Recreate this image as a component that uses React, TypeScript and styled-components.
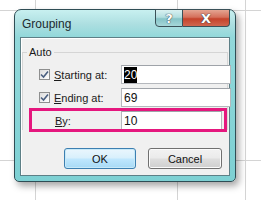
import React from 'react'
import styled, { createGlobalStyle } from 'styled-components'

const GlobalStyle = createGlobalStyle`
  html, body {
    margin: 0;
    padding: 0;
    background: #ffffff;
  }
  body {
    font-family: "Liberation Sans", Arial, sans-serif;
  }
`

const Sheet = styled.div`
  width: 261px;
  height: 200px;
  box-sizing: border-box;
  padding: 9px 0 0 14px;
  overflow: hidden;
  background-color: #ffffff;
  background-image:
    linear-gradient(to bottom, transparent 10px, #d4d4d4 10px, #d4d4d4 11px, transparent 11px),
    linear-gradient(to bottom, transparent 160px, #d4d4d4 160px, #d4d4d4 161px, transparent 161px),
    linear-gradient(to right, transparent 35px, #d4d4d4 35px, #d4d4d4 36px, transparent 36px),
    linear-gradient(to right, transparent 177px, #d4d4d4 177px, #d4d4d4 178px, transparent 178px),
    linear-gradient(to right, transparent 245px, #d4d4d4 245px, #d4d4d4 246px, transparent 246px);
`

const Dialog = styled.div`
  width: 222px;
  height: 173px;
  box-sizing: border-box;
  display: flex;
  flex-direction: column;
  border: 1px solid #2f4d55;
  border-radius: 7px 7px 5px 5px;
  background: linear-gradient(to bottom, #c8f0f0 0px, #addfe1 14px, #92d8da 27px, #7dd0d3 100%);
  box-shadow: 3px 4px 7px rgba(0, 0, 0, 0.35);
  padding: 0 5px 5px 5px;
`

const TitleBar = styled.div`
  height: 27px;
  display: flex;
  align-items: flex-start;
  justify-content: space-between;
`

const Title = styled.span`
  font-size: 12px;
  color: #1b2a30;
  padding: 7px 0 0 2px;
`

const TitleButtons = styled.div`
  display: flex;
  margin-top: -1px;
`

const TitleButton = styled.div<{ $close?: boolean }>`
  height: 18px;
  width: ${p => (p.$close ? '47px' : '28px')};
  box-sizing: border-box;
  display: flex;
  align-items: center;
  justify-content: center;
  border: 1px solid #3a5158;
  border-left-width: ${p => (p.$close ? '0' : '1px')};
  border-radius: ${p => (p.$close ? '0 0 4px 0' : '0 0 0 4px')};
  background: ${p =>
    p.$close
      ? 'linear-gradient(to bottom, #e4a592 0%, #d5705b 45%, #c5432b 55%, #d0674f 100%)'
      : 'linear-gradient(to bottom, #d9f1f1 0%, #b3dfe0 45%, #86c4c7 55%, #a6d7d9 100%)'};
  color: #ffffff;
  font-weight: bold;
  font-size: 13px;
  font-family: "DejaVu Sans", sans-serif;
  text-shadow: 0 0 1px #2a3a40, 0 0 1px #2a3a40;
`

const Client = styled.div`
  flex: 1;
  display: flex;
  flex-direction: column;
  border: 1px solid #5d7f86;
  background: #f0f0f0;
  box-shadow: inset 1px 1px 0 #ffffff;
`

const GroupBox = styled.div`
  position: relative;
  margin: 14px 1px 0 1px;
  border: 1px solid #d5d5d5;
  border-bottom: none;
  padding: 12px 0 0 16px;
  display: flex;
  flex-direction: column;
  gap: 4px;
`

const GroupLabel = styled.span`
  position: absolute;
  top: -7px;
  left: 4px;
  padding: 0 2px;
  background: #f0f0f0;
  font-size: 11px;
  color: #1a1a1a;
  line-height: 13px;
`

const Row = styled.div`
  position: relative;
  display: grid;
  grid-template-columns: 82px auto;
  align-items: center;
  height: 19px;
  margin-right: -2px;
`

const LabelCell = styled.div`
  display: flex;
  align-items: center;
`

const CheckBox = styled.span`
  width: 11px;
  height: 11px;
  box-sizing: border-box;
  border: 1px solid #8e8f8f;
  background: linear-gradient(135deg, #dcdcdc, #ffffff);
  display: flex;
  align-items: center;
  justify-content: center;
  margin-right: 4px;
`

const Label = styled.span<{ $indent?: boolean }>`
  font-size: 11px;
  color: #1a1a1a;
  padding-left: ${p => (p.$indent ? '16px' : '0')};
  u {
    text-decoration: underline;
  }
`

const Field = styled.div<{ $w?: number }>`
  width: ${p => p.$w ?? 110}px;
  height: 19px;
  box-sizing: border-box;
  border: 1px solid #b5b8bd;
  border-top-color: #9fa3a9;
  background: #ffffff;
  font-size: 12px;
  color: #111;
  display: flex;
  align-items: center;
  padding-left: 2px;
`

const Selected = styled.span`
  background: #000000;
  color: #ffffff;
  padding: 1px 0;
`

const Highlight = styled.span`
  position: absolute;
  left: -10px;
  right: 2px;
  top: -3px;
  bottom: -2px;
  border: 3px solid #e5177e;
  pointer-events: none;
`

const ButtonRow = styled.div`
  display: flex;
  gap: 12px;
  margin: 18px 0 0 43px;
`

const Button = styled.div<{ $default?: boolean }>`
  width: ${p => (p.$default ? '72px' : '74px')};
  height: 21px;
  box-sizing: border-box;
  border: 1px solid ${p => (p.$default ? '#3c7fb1' : '#707070')};
  border-radius: 3px;
  background: ${p =>
    p.$default
      ? 'linear-gradient(to bottom, #eaf6fd 0%, #d9f0fc 45%, #bee6fd 55%, #a7d9f5 100%)'
      : 'linear-gradient(to bottom, #f2f2f2 0%, #ebebeb 45%, #dddddd 55%, #cfcfcf 100%)'};
  box-shadow: inset 0 0 0 1px ${p => (p.$default ? '#c8e9f8' : '#fbfbfb')};
  display: flex;
  align-items: center;
  justify-content: center;
  font-size: 11px;
  color: #111;
`

const Check = () => (
  <svg width="9" height="9" viewBox="0 0 9 9">
    <path d="M1 4.5 L3.5 7 L8 1.5" fill="none" stroke="#4a5f80" strokeWidth="1.6" />
  </svg>
)

export default function App() {
  return (
    <Sheet>
      <GlobalStyle />
      <Dialog>
        <TitleBar>
          <Title>Grouping</Title>
          <TitleButtons>
            <TitleButton>?</TitleButton>
            <TitleButton $close>X</TitleButton>
          </TitleButtons>
        </TitleBar>
        <Client>
          <GroupBox>
            <GroupLabel>Auto</GroupLabel>
            <Row>
              <LabelCell>
                <CheckBox><Check /></CheckBox>
                <Label><u>S</u>tarting at:</Label>
              </LabelCell>
              <Field><Selected>20</Selected></Field>
            </Row>
            <Row>
              <LabelCell>
                <CheckBox><Check /></CheckBox>
                <Label><u>E</u>nding at:</Label>
              </LabelCell>
              <Field>69</Field>
            </Row>
            <Row>
              <LabelCell>
                <Label $indent><u>B</u>y:</Label>
              </LabelCell>
              <Field $w={101}>10</Field>
              <Highlight />
            </Row>
          </GroupBox>
          <ButtonRow>
            <Button $default>OK</Button>
            <Button>Cancel</Button>
          </ButtonRow>
        </Client>
      </Dialog>
    </Sheet>
  )
}
